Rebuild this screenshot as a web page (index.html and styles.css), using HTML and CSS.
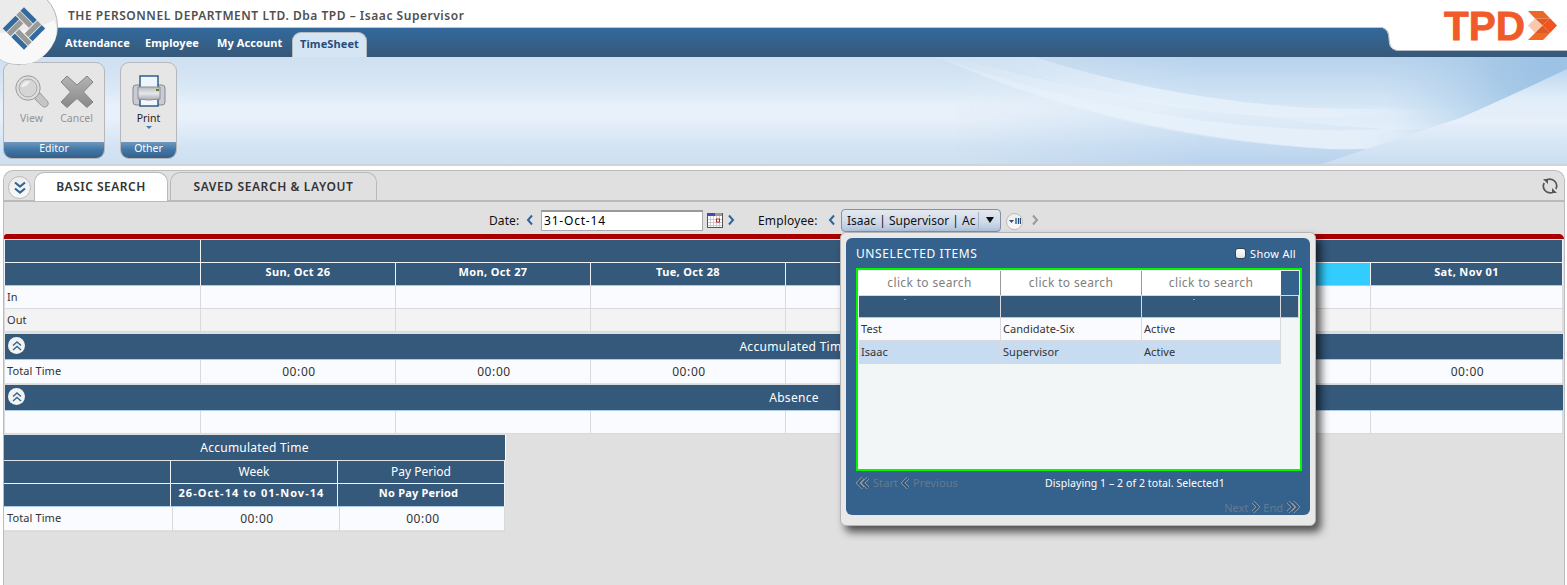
FILE: index.html
```html
<!DOCTYPE html>
<html lang="en">
<head>
  <meta charset="utf-8">
  <title>TimeSheet</title>
  <link rel="stylesheet" href="styles.css">
</head>
<body>
  <svg class="defs" width="0" height="0">
    <defs>
      <linearGradient id="steel" x1="0" y1="0" x2="0" y2="1"><stop offset="0" stop-color="#b4b4b4"/><stop offset="1" stop-color="#888"/></linearGradient>
      <linearGradient id="silver" x1="0" y1="0" x2="0" y2="1"><stop offset="0" stop-color="#b6bac0"/><stop offset=".5" stop-color="#e4e6ea"/><stop offset="1" stop-color="#a7abb2"/></linearGradient>
      <linearGradient id="bandTop" x1="0" y1="0" x2="0" y2="1"><stop offset="0" stop-color="#b6d2ec"/><stop offset=".75" stop-color="#d9e9f7"/><stop offset="1" stop-color="#e0edf8"/></linearGradient>
      <linearGradient id="bandLow" x1="0" y1="0" x2="0" y2="1"><stop offset="0" stop-color="#e6effa"/><stop offset=".4" stop-color="#e0ecf8"/><stop offset="1" stop-color="#b9d3ed"/></linearGradient>
      <linearGradient id="fadeIn"><stop offset=".08" stop-color="#000"/><stop offset=".45" stop-color="#fff"/></linearGradient>
      <linearGradient id="sail" x1="0" y1="0" x2="0" y2="1"><stop offset="0" stop-color="#bcd7f0"/><stop offset=".3" stop-color="#e0edf9"/><stop offset=".55" stop-color="#e6effa"/><stop offset="1" stop-color="#c9def1"/></linearGradient>
      <radialGradient id="corner" gradientUnits="userSpaceOnUse" cx="650" cy="8" r="170"><stop offset="0" stop-color="#9bc1e3"/><stop offset=".3" stop-color="#9fc4e5" stop-opacity=".8"/><stop offset="1" stop-color="#b6d2ec" stop-opacity="0"/></radialGradient>
      <linearGradient id="swoosh"><stop offset="0" stop-color="#eaf3fb" stop-opacity=".2"/><stop offset=".35" stop-color="#e8f2fb"/><stop offset=".75" stop-color="#e6f0fa"/><stop offset="1" stop-color="#e4eff9" stop-opacity="0"/></linearGradient>
      <mask id="fade"><rect width="667" height="107" fill="url(#fadeIn)"/></mask>
    </defs>
  </svg>

  <header class="header">
    <div class="badge">
      <svg width="58" height="65" viewBox="0 0 58 65">
        <circle cx="19" cy="26" r="38.500" fill="#ebebeb" stroke="#b5b5b5"/>
        <path d="M0 33Q32 32 54 20Q59 30 55 40Q42 66 19 64Q6 64 0 59z" fill="#f8f8f8"/>
        <g transform="translate(24 28.500) rotate(45)">
          <g fill="#33699c"><rect x="-15" y="-15" width="18" height="5"/><rect x="10" y="-15" width="5" height="18"/><rect x="-3" y="10" width="18" height="5"/><rect x="-15" y="-3" width="5" height="18"/></g>
          <g fill="#989a98"><rect x="-15" y="-9.300" width="18" height="5.300"/><rect x="4" y="-15" width="5.300" height="18"/><rect x="-3" y="4" width="18" height="5.300"/><rect x="-9.300" y="-3" width="5.300" height="18"/></g>
        </g>
      </svg>
    </div>
    <div class="company">THE PERSONNEL DEPARTMENT LTD. Dba TPD – Isaac Supervisor</div>
    <nav class="nav">
      <a class="nav-item attendance">Attendance</a>
      <a class="nav-item employee">Employee</a>
      <a class="nav-item account">My Account</a>
      <a class="nav-item active">TimeSheet</a>
    </nav>
    <div class="brand">
      <svg class="notch" width="184" height="52" viewBox="0 0 184 52">
        <path d="M0 0H184V50.500H13Q6 49 6 41Q6 28 -3 27.500L0 0z" fill="#fff"/>
        <path d="M-2 27.500Q6 28 6 38Q6 49 14 50.500H184" fill="none" stroke="#b9bdc1"/>
      </svg>
      <span class="brand-name">TPD</span>
      <svg class="brand-arrow" width="30" height="30" viewBox="0 0 30 30">
        <path d="M0 0H15L22 7.500H7z" fill="#ee6623"/><path d="M15 0L29 14.500L22 22L14.500 14.500L22 7.500z" fill="#f2541f"/>
        <path d="M7 7.500H22L14.500 14.500z" fill="#d95d28"/><path d="M0 14.500L7 7.500L14.500 14.500L7 22z" fill="#fbc8ae"/>
        <path d="M14.500 14.500L22 22H7z" fill="#d95d28"/><path d="M7 22H22L15 29H0z" fill="#f26b24"/>
      </svg>
    </div>
  </header>

  <section class="ribbon">
    <svg class="waves" width="667" height="107" viewBox="0 0 667 107">
      <g mask="url(#fade)">
        <path d="M50 0H667V107H50z" fill="url(#bandLow)"/>
        <path d="M50 0H667V60Q520 85 370 60Q200 40 50 0z" fill="url(#bandTop)"/>
      </g>
      <path d="M85 0Q250 60 430 60Q500 60 580 45L540 85Q490 93 430 92Q220 82 38 0z" fill="url(#swoosh)" opacity=".5"/>
      <path d="M85 0Q245 60 420 61Q480 60 560 52Q470 52 410 51Q260 41 135 0z" fill="url(#swoosh)" opacity=".8"/>
      <path d="M38 0Q220 66 420 73Q490 76 600 56L560 82Q480 94 430 92Q210 77 38 0z" fill="url(#swoosh)" opacity=".85"/>
      <path d="M470 0H667V107H470z" fill="url(#corner)"/>
      <path d="M667 12Q600 44 560 61Q490 84 422 107H667z" fill="url(#sail)"/>
    </svg>
    <div class="group editor">
      <div class="group-body">
        <div class="tool off">
          <svg width="36" height="36" viewBox="0 0 36 36">
            <path d="M22 22L26 19L34 28Q35 32 31 33Q29 34 21 25z" fill="#c6c6c6" stroke="#999"/>
            <circle cx="14" cy="14" r="10.700" fill="#d5d5d5" stroke="#dedede" stroke-width="3"/>
            <circle cx="14" cy="14" r="12.200" fill="none" stroke="#999"/><circle cx="14" cy="14" r="9" fill="none" stroke="#aaa"/>
            <path d="M7 13Q9 6 16 7Q13 13 7 13z" fill="#efefef"/>
          </svg>
          <span>View</span>
        </div>
        <div class="tool off">
          <svg width="36" height="36" viewBox="0 0 36 36"><path d="M8 2L18 11L28 2L34 8L24.500 18L34 28L28 33.500L18 24.500L8 33.500L2 28L11.500 18L2 8z" fill="url(#steel)" stroke="#858585"/></svg>
          <span>Cancel</span>
        </div>
      </div>
      <div class="group-title">Editor</div>
    </div>
    <div class="group other">
      <div class="group-body">
        <div class="tool">
          <svg width="36" height="36" viewBox="0 0 36 36">
            <path d="M2 14Q2 11 5 11H31Q34 11 34 14V28Q34 31 31 31H5Q2 31 2 28z" fill="#c8cbd1" stroke="#85898f"/>
            <path d="M9 2H27V18H9z" fill="#eef5fb" stroke="#355d86" stroke-width="1.500"/>
            <path d="M9 23H27V32H9z" fill="#f4f8fc" stroke="#355d86" stroke-width="1.500"/>
            <path d="M7 13H29V25Q18 27 7 25z" fill="url(#silver)" stroke="#8d9197"/>
            <rect x="25" y="15" width="3" height="2" fill="#687b25"/>
          </svg>
          <span>Print</span>
          <i class="caret"></i>
        </div>
      </div>
      <div class="group-title">Other</div>
    </div>
  </section>

  <main class="panel">
    <div class="tabs">
      <div class="round expand"><svg width="14" height="14" viewBox="0 0 14 14"><path d="M2 1.500L7 5.500L12 1.500M2 7.500L7 11.500L12 7.500" fill="none" stroke="#326699" stroke-width="2.200"/></svg></div>
      <div class="tab current">BASIC SEARCH</div>
      <div class="tab">SAVED SEARCH &amp; LAYOUT</div>
      <svg class="refresh" width="18" height="18" viewBox="0 0 18 18">
        <path d="M6 2.500Q11 1 14 4.500Q17 8 14.800 12M12 15.500Q7 17 4 13.500Q1 10 3.200 6" fill="none" stroke="#555" stroke-width="1.700"/>
        <path d="M2 2H7V7zM16 16H11V11z" fill="#555"/>
      </svg>
    </div>

    <div class="filters">
      <label class="date-label">Date:</label>
      <svg class="chev" width="8" height="12" viewBox="0 0 8 12"><path d="M6 1.500L2 6L6 10.500" fill="none" stroke="#2d6699" stroke-width="2"/></svg>
      <input class="date" type="text" value="31-Oct-14">
      <svg class="calendar" width="16" height="15" viewBox="0 0 16 15">
        <rect width="16" height="15" fill="#555"/><rect x="1" y="3" width="14" height="11" fill="#fff"/><rect width="8" height="3" fill="#4848b0"/><rect x="8" width="7" height="3" fill="#999"/>
        <path d="M1 6.500H15M1 9.500H15M1 12.500H15M3.500 3V14M6.500 3V14M9.500 3V14M12.500 3V14" stroke="#ccc"/><rect x="9.500" y="6" width="3" height="3" fill="#fff" stroke="#b22"/>
      </svg>
      <svg class="chev next-date" width="8" height="12" viewBox="0 0 8 12"><path d="M2 1.500L6 6L2 10.500" fill="none" stroke="#2d6699" stroke-width="2"/></svg>
      <label class="emp-label">Employee:</label>
      <svg class="chev" width="8" height="12" viewBox="0 0 8 12"><path d="M6 1.500L2 6L6 10.500" fill="none" stroke="#2d6699" stroke-width="2"/></svg>
      <div class="select"><span>Isaac | Supervisor | Ac</span><i></i></div>
      <div class="round list"><svg width="12" height="8" viewBox="0 0 12 8"><path d="M0 3H5L2.500 6z" fill="#25517b"/><path d="M7 1V7M9.500 1V7M11.500 1V7" stroke="#25517b" stroke-width="1.300"/></svg></div>
      <svg class="chev" width="8" height="12" viewBox="0 0 8 12"><path d="M2 1.500L6 6L2 10.500" fill="none" stroke="#999" stroke-width="2"/></svg>
    </div>

    <div class="redline"></div>

    <div class="sheet">
      <div class="row head top"><div></div><div class="wide"></div></div>
      <div class="row head days">
        <div></div><div>Sun, Oct 26</div><div>Mon, Oct 27</div><div>Tue, Oct 28</div><div></div><div></div><div class="today"></div><div>Sat, Nov 01</div>
      </div>
      <div class="row"><div>In</div><div></div><div></div><div></div><div></div><div></div><div></div><div></div></div>
      <div class="row alt"><div>Out</div><div></div><div></div><div></div><div></div><div></div><div></div><div></div></div>
      <div class="section">
        <b class="collapse"><svg width="10" height="12" viewBox="0 0 10 12"><path d="M1 5.500L5 2L9 5.500M1 10L5 6.500L9 10" fill="none" stroke="#35658f" stroke-width="1.400"/></svg></b>
        <span>Accumulated Time</span>
      </div>
      <div class="row times"><div>Total Time</div><div>00:00</div><div>00:00</div><div>00:00</div><div></div><div></div><div></div><div>00:00</div></div>
      <div class="section">
        <b class="collapse"><svg width="10" height="12" viewBox="0 0 10 12"><path d="M1 5.500L5 2L9 5.500M1 10L5 6.500L9 10" fill="none" stroke="#35658f" stroke-width="1.400"/></svg></b>
        <span>Absence</span>
      </div>
      <div class="row"><div></div><div></div><div></div><div></div><div></div><div></div><div></div><div></div></div>
    </div>

    <div class="summary">
      <div class="summary-title">Accumulated Time</div>
      <div class="srow"><div></div><div>Week</div><div>Pay Period</div></div>
      <div class="srow strong"><div></div><div class="week">26-Oct-14 to 01-Nov-14</div><div>No Pay Period</div></div>
      <div class="srow total"><div>Total Time</div><div>00:00</div><div>00:00</div></div>
    </div>
  </main>

  <div class="popup">
    <div class="popup-inner">
      <div class="popup-head">
        <span>UNSELECTED ITEMS</span>
        <label class="show-all"><i class="check"></i>Show All</label>
      </div>
      <div class="list-box">
        <div class="prow search"><div>click to search</div><div>click to search</div><div>click to search</div><div></div></div>
        <div class="prow phead"><div><i class="tick"></i></div><div></div><div><i class="tick"></i></div><div></div></div>
        <div class="prow"><div>Test</div><div>Candidate-Six</div><div>Active</div></div>
        <div class="prow picked"><div>Isaac</div><div>Supervisor</div><div>Active</div></div>
      </div>
      <div class="pager">
        <div class="pager-left">
          <svg width="14" height="12" viewBox="0 0 14 12"><path d="M7 1L2 6L7 11M12 1L7 6L12 11" fill="none" stroke="#98a9ba" stroke-width="3.200"/><path d="M7 1L2 6L7 11M12 1L7 6L12 11" fill="none" stroke="#34516f" stroke-width="1.800"/></svg>
          <span>Start</span>
          <svg width="9" height="12" viewBox="0 0 9 12"><path d="M7 1L2 6L7 11" fill="none" stroke="#98a9ba" stroke-width="3.200"/><path d="M7 1L2 6L7 11" fill="none" stroke="#34516f" stroke-width="1.800"/></svg>
          <span>Previous</span>
        </div>
        <div class="pager-info">Displaying 1 – 2 of 2 total. Selected1</div>
      </div>
      <div class="pager-right">
        <span>Next</span>
        <svg width="9" height="12" viewBox="0 0 9 12"><path d="M2 1L7 6L2 11" fill="none" stroke="#98a9ba" stroke-width="3.200"/><path d="M2 1L7 6L2 11" fill="none" stroke="#34516f" stroke-width="1.800"/></svg>
        <span>End</span>
        <svg width="14" height="12" viewBox="0 0 14 12"><path d="M2 1L7 6L2 11M7 1L12 6L7 11" fill="none" stroke="#98a9ba" stroke-width="3.200"/><path d="M2 1L7 6L2 11M7 1L12 6L7 11" fill="none" stroke="#34516f" stroke-width="1.800"/></svg>
      </div>
    </div>
  </div>
</body>
</html>
```
FILE: styles.css
```css
* {
  box-sizing: border-box;
}
body {
  margin: 0;
  height: 585px;
  overflow: hidden;
  position: relative;
  background: #fff;
  font-family: "Noto Sans", "Open Sans", sans-serif;
  font-size: 12px;
  color: #333;
}
svg {
  display: block;
  flex: none;
}
.defs {
  position: absolute;
}

/* header */
.header {
  position: relative;
  height: 57px;
}
.badge {
  position: absolute;
  left: 0;
  top: 0;
  z-index: 3;
}
.company {
  height: 28px;
  padding-left: 68px;
  border-bottom: 1px solid #c4c4c4;
  font-size: 12px;
  font-weight: 600;
  letter-spacing: .53px;
  line-height: 31px;
  color: #505050;
  white-space: nowrap;
}
.nav {
  display: flex;
  height: 29px;
  padding-left: 65px;
  background: linear-gradient(#32699d, #375878);
  color: #fff;
  font-size: 11px;
  font-weight: bold;
  letter-spacing: .1px;
  line-height: 30px;
}
.nav-item {
  white-space: nowrap;
}
.attendance {
  width: 80px;
}
.employee {
  width: 72px;
}
.account {
  width: 75px;
}
.nav-item.active {
  width: 75px;
  height: 25px;
  margin-top: 4px;
  border: 1px solid #b7bcc2;
  border-bottom: 0;
  border-radius: 9px 9px 0 0;
  background: #d6e5f4;
  color: #274d7e;
  line-height: 22px;
  text-align: center;
}
.brand {
  position: absolute;
  right: 0;
  top: 0;
  width: 184px;
  height: 52px;
}
.notch {
  position: absolute;
}
.brand-name {
  position: absolute;
  left: 61px;
  top: 3px;
  font: bold 40.5px/46px "Liberation Sans", Arial, sans-serif;
  color: #f15a29;
  -webkit-text-stroke: .8px #f15a29;
}
.brand-arrow {
  position: absolute;
  left: 145px;
  top: 11px;
}

/* ribbon */
.ribbon {
  position: relative;
  display: flex;
  gap: 15px;
  height: 109px;
  padding: 5px 3px;
  border-bottom: 2px solid #d0d3d8;
  background: linear-gradient(#cfe0f1, #d3e3f3 15%, #dae9f6 30%, #e8f0fa 45%, #e8f0fa 57%, #dce9f6 73%, #d2e3f3 85%, #cfe1f1);
}
.waves {
  position: absolute;
  right: 0;
  top: 0;
}
.group {
  display: flex;
  flex-direction: column;
  height: 97px;
  border: 1px solid #b5b7ba;
  border-radius: 9px;
  overflow: hidden;
  background: #e6e6e6;
}
.editor {
  width: 102px;
}
.other {
  width: 57px;
}
.group-body {
  display: flex;
  justify-content: center;
  gap: 9px;
  height: 79px;
  padding-top: 11px;
  font-size: 10.5px;
}
.tool {
  display: flex;
  flex-direction: column;
  align-items: center;
  width: 36px;
  color: #222;
}
.tool span {
  line-height: 16px;
}
.tool.off {
  color: #949494;
}
.caret {
  border: 3px solid transparent;
  border-top-color: #3e7eb3;
}
.group-title {
  flex: 1;
  background: linear-gradient(#7198be, #4378a8 45%, #34608c);
  color: #fff;
  font-size: 10.5px;
  line-height: 12px;
  text-align: center;
}

/* search panel */
.panel {
  height: 420px;
  margin: 4px 2px 0 3px;
  border: 1px solid #bcbcbc;
  border-bottom: 0;
  border-radius: 10px 10px 0 0;
  background: #e0e0e0;
}
.tabs {
  display: flex;
  height: 31px;
  padding: 1px 5px 0 4px;
  border-bottom: 2px solid #bababa;
}
.round {
  display: flex;
  align-items: center;
  justify-content: center;
  border: 1px solid #bbb;
  border-radius: 50%;
  background: linear-gradient(#ececec, #fafafa);
}
.expand {
  width: 23px;
  height: 23px;
  margin: 4px 3px 0 0;
}
.tab {
  width: 207px;
  height: 28px;
  border: 1px solid #b9b9b9;
  border-bottom: 0;
  border-radius: 10px 10px 0 0;
  font-size: 12px;
  font-weight: 600;
  letter-spacing: .6px;
  line-height: 28px;
  text-align: center;
}
.tab.current {
  width: 134px;
  height: 29px;
  margin-right: 2px;
  background: #fff;
  letter-spacing: .5px;
}
.refresh {
  margin: 5px 0 0 auto;
}
.filters {
  display: flex;
  align-items: center;
  height: 32px;
  padding: 4px 0 0 485px;
  color: #111;
}
.date-label {
  width: 37px;
  letter-spacing: .1px;
}
.date {
  width: 162px;
  height: 21px;
  margin: 0 4px 0 7px;
  padding: 0 2px;
  border: 1px solid #aaa;
  border-top: 2px solid #999;
  background: #fff;
  font: 12px "Noto Sans", sans-serif;
  letter-spacing: .8px;
}
.calendar {
  margin-right: 4px;
}
.emp-label {
  width: 70px;
  margin-left: 23px;
  letter-spacing: .15px;
}
.select {
  display: flex;
  align-items: center;
  width: 160px;
  height: 23px;
  margin-left: 5px;
  padding-left: 5px;
  border: 1px solid #8291a5;
  border-radius: 4px;
  background: linear-gradient(#e5e9f0, #cdd9e9 60%, #b0c3dc);
  white-space: nowrap;
}
.select span {
  width: 132px;
  border-right: 1px solid #a6b3c3;
}
.select i {
  margin: 4px 0 0 7px;
  border: 4px solid transparent;
  border-top: 6px solid #111;
}
.list {
  width: 17px;
  height: 17px;
  margin: 2px 8px 0 5px;
}
.redline {
  height: 5px;
  border-radius: 3px 5px 0 0;
  background: #a60000;
}

/* weekly grid */
.sheet {
  width: 1559px;
  padding-top: 1px;
}
.row {
  display: grid;
  grid-template-columns: 197px repeat(6, 195px) 192px;
  height: 23px;
  background: #fafbfe;
  font-size: 11px;
  letter-spacing: .1px;
  line-height: 22px;
}
.row > div {
  border-right: 1px solid #d8dadd;
  border-bottom: 1px solid #d8dadd;
  text-align: center;
}
.row > div:first-child {
  padding-left: 2px;
  border-left: 1px solid #d8dadd;
  text-align: left;
}
.row.alt {
  background: #f3f3f3;
}
.row.head {
  background: #35597b;
  color: #fff;
  font-weight: bold;
  letter-spacing: .35px;
  line-height: 18px;
}
.row.head > div {
  border-color: #eef2f5;
}
.row.days > div {
  border-bottom-color: #aecbe6;
}
.row.days > .today {
  background: #33ccff;
}
.wide {
  grid-column: 2 / -1;
}
.times > div + div {
  padding-left: 2px;
  font-size: 12px;
  letter-spacing: .6px;
  line-height: 24px;
}
.section {
  display: flex;
  height: 26px;
  margin: 2px 0 0 1px;
  border-bottom: 1px solid #aecbe6;
  background: #35597b;
  color: #fff;
  font-size: 12px;
  letter-spacing: .3px;
  line-height: 25px;
}
.section span {
  flex: 1;
  text-align: center;
}
.collapse {
  display: flex;
  align-items: center;
  justify-content: center;
  width: 17px;
  height: 17px;
  margin: 3px 0 0 3px;
  border-radius: 50%;
  background: #f3f3f3;
}

/* accumulated time summary */
.summary {
  width: 502px;
  margin-top: 1px;
  font-size: 12px;
  color: #fff;
  text-align: center;
}
.summary-title {
  height: 26px;
  border-right: 1px solid #fff;
  border-bottom: 1px solid #dfe3e6;
  background: #35597b;
  letter-spacing: .25px;
  line-height: 25px;
}
.srow {
  display: grid;
  grid-template-columns: 167px 167px 167px;
  width: 501px;
  height: 23px;
  background: #35597b;
  line-height: 22px;
}
.srow > div {
  border-right: 1px solid #eef2f5;
  border-bottom: 1px solid #eef2f5;
}
.strong {
  font-size: 11px;
  font-weight: bold;
  letter-spacing: .2px;
  line-height: 18px;
}
.strong > div {
  padding-right: 5px;
  border-bottom-color: #aecbe6;
}
.strong > .week {
  letter-spacing: 1.05px;
}
.total {
  grid-template-columns: 169px 167px 165px;
  background: #fafbfe;
  color: #333;
  letter-spacing: .6px;
  line-height: 24px;
}
.total > div {
  padding-left: 2px;
  border-color: #d8dadd;
}
.total > div:first-child {
  padding-left: 3px;
  font-size: 11px;
  letter-spacing: .1px;
  line-height: 22px;
  text-align: left;
}

/* employee dropdown */
.popup {
  position: absolute;
  left: 840px;
  top: 232px;
  z-index: 5;
  width: 476px;
  height: 294px;
  padding: 5px;
  border: 1px solid #b5b5b5;
  border-radius: 6px;
  background: #e9e9e9;
  box-shadow: 5px 6px 9px rgba(0, 0, 0, .65);
}
.popup-inner {
  height: 277px;
  padding: 0 8px 0 10px;
  border-radius: 6px;
  background: #35628d;
  color: #fff;
}
.popup-head {
  display: flex;
  justify-content: space-between;
  height: 30px;
  letter-spacing: .6px;
  line-height: 31px;
}
.show-all {
  display: flex;
  align-items: center;
  gap: 4px;
  padding-right: 6px;
  font-size: 11px;
  letter-spacing: .3px;
  line-height: 29px;
}
.check {
  width: 11px;
  height: 11px;
  border: 1px solid #31465d;
  border-radius: 3px;
  background: linear-gradient(#fff, #e3e3e3);
}
.list-box {
  height: 203px;
  padding: 1px;
  border: 2px solid #00f800;
  background: #f2f6f7;
}
.prow {
  display: grid;
  grid-template-columns: 142px 141px 139px;
  width: 422px;
  height: 23px;
  background: #fafbfe;
  color: #333;
  font-size: 11px;
  letter-spacing: .05px;
  line-height: 22px;
}
.prow > div {
  padding-left: 2px;
  border-right: 1px solid #d8dadd;
  border-bottom: 1px solid #d8dadd;
}
.prow.search {
  grid-template-columns: 142px 141px 139px 1fr;
  width: 440px;
  height: 24px;
  background: #35628d;
  color: #808080;
  font-size: 12px;
  letter-spacing: .35px;
  line-height: 24px;
  text-align: center;
}
.prow.search > div {
  padding: 0;
  border-right-color: #999;
  background: #fff;
}
.prow.search > div:nth-child(3) {
  border-right-color: #fff;
}
.prow.search > div:last-child {
  border-right: 0;
  background: #35628d;
}
.prow.phead {
  grid-template-columns: 142px 141px 139px 1fr;
  width: 440px;
  background: #35597b;
}
.prow.phead > div {
  border-bottom-color: #aecbe6;
  padding: 4px 0 0 45px;
}
.prow.phead > div:nth-child(3) {
  padding-left: 51px;
}
.prow.phead > div:last-child {
  padding: 0;
}
.tick {
  display: block;
  width: 2px;
  height: 1px;
  background: #8fa6bb;
}
.prow.picked {
  background: #c7dcf0;
}
.pager {
  display: flex;
  height: 24px;
  font-size: 10.5px;
  letter-spacing: .08px;
  line-height: 24px;
}
.pager-left,
.pager-right {
  display: flex;
  align-items: center;
  gap: 3px;
  color: #65798e;
  font-size: 11px;
}
.pager-left {
  width: 189px;
}
.pager-right {
  justify-content: flex-end;
  height: 18px;
  padding: 6px 2px 0 0;
}
```
